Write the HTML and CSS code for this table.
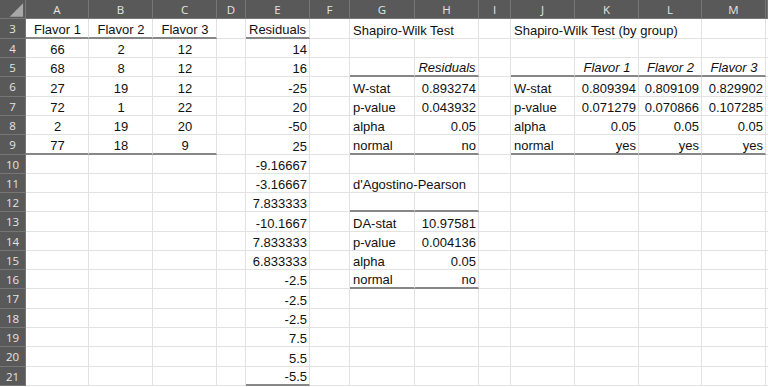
FILE: index.html
```html
<!DOCTYPE html>
<html lang="en">
<head>
<meta charset="utf-8">
<title>Shapiro-Wilk Test</title>
<link rel="stylesheet" href="styles.css">
</head>
<body>
<div class="sheet">
  <!-- column header row -->
  <div class="h corner"><svg width="26" height="19" viewBox="0 0 26 19"><polygon points="24,3 24,17 10,17" fill="#a8a8a8"/></svg></div>
  <div class="h">A</div><div class="h">B</div><div class="h">C</div><div class="h">D</div><div class="h">E</div><div class="h">F</div><div class="h">G</div><div class="h">H</div><div class="h">I</div><div class="h">J</div><div class="h">K</div><div class="h">L</div><div class="h">M</div><div class="h"></div>

  <!-- row 3 -->
  <div class="h">3</div>
  <div class="c b">Flavor 1</div><div class="c b">Flavor 2</div><div class="c b">Flavor 3</div><div></div>
  <div class="b">Residuals</div><div></div>
  <div class="s2">Shapiro-Wilk Test</div><div></div>
  <div class="s3">Shapiro-Wilk Test (by group)</div><div></div><div></div>

  <!-- row 4 -->
  <div class="h">4</div>
  <div class="c">66</div><div class="c">2</div><div class="c">12</div><div></div>
  <div class="r">14</div><div></div>
  <div></div><div></div><div></div>
  <div></div><div></div><div></div><div></div><div></div>

  <!-- row 5 -->
  <div class="h">5</div>
  <div class="c">68</div><div class="c">8</div><div class="c">12</div><div></div>
  <div class="r">16</div><div></div>
  <div class="b"></div><div class="c i b">Residuals</div><div></div>
  <div class="b"></div><div class="c i b">Flavor 1</div><div class="c i b">Flavor 2</div><div class="c i b">Flavor 3</div><div></div>

  <!-- row 6 -->
  <div class="h">6</div>
  <div class="c">27</div><div class="c">19</div><div class="c">12</div><div></div>
  <div class="r">-25</div><div></div>
  <div>W-stat</div><div class="r">0.893274</div><div></div>
  <div>W-stat</div><div class="r">0.809394</div><div class="r">0.809109</div><div class="r">0.829902</div><div></div>

  <!-- row 7 -->
  <div class="h">7</div>
  <div class="c">72</div><div class="c">1</div><div class="c">22</div><div></div>
  <div class="r">20</div><div></div>
  <div>p-value</div><div class="r">0.043932</div><div></div>
  <div>p-value</div><div class="r">0.071279</div><div class="r">0.070866</div><div class="r">0.107285</div><div></div>

  <!-- row 8 -->
  <div class="h">8</div>
  <div class="c">2</div><div class="c">19</div><div class="c">20</div><div></div>
  <div class="r">-50</div><div></div>
  <div>alpha</div><div class="r">0.05</div><div></div>
  <div>alpha</div><div class="r">0.05</div><div class="r">0.05</div><div class="r">0.05</div><div></div>

  <!-- row 9 -->
  <div class="h">9</div>
  <div class="c b">77</div><div class="c b">18</div><div class="c b">9</div><div></div>
  <div class="r">25</div><div></div>
  <div class="b">normal</div><div class="r b">no</div><div></div>
  <div class="b">normal</div><div class="r b">yes</div><div class="r b">yes</div><div class="r b">yes</div><div></div>

  <!-- row 10 -->
  <div class="h">10</div>
  <div></div><div></div><div></div><div></div>
  <div class="r">-9.16667</div><div></div>
  <div></div><div></div><div></div>
  <div></div><div></div><div></div><div></div><div></div>

  <!-- row 11 -->
  <div class="h">11</div>
  <div></div><div></div><div></div><div></div>
  <div class="r">-3.16667</div><div></div>
  <div class="s2">d'Agostino-Pearson</div><div></div>
  <div></div><div></div><div></div><div></div><div></div>

  <!-- row 12 -->
  <div class="h">12</div>
  <div></div><div></div><div></div><div></div>
  <div class="r">7.833333</div><div></div>
  <div class="b"></div><div class="b"></div><div></div>
  <div></div><div></div><div></div><div></div><div></div>

  <!-- row 13 -->
  <div class="h">13</div>
  <div></div><div></div><div></div><div></div>
  <div class="r">-10.1667</div><div></div>
  <div>DA-stat</div><div class="r">10.97581</div><div></div>
  <div></div><div></div><div></div><div></div><div></div>

  <!-- row 14 -->
  <div class="h">14</div>
  <div></div><div></div><div></div><div></div>
  <div class="r">7.833333</div><div></div>
  <div>p-value</div><div class="r">0.004136</div><div></div>
  <div></div><div></div><div></div><div></div><div></div>

  <!-- row 15 -->
  <div class="h">15</div>
  <div></div><div></div><div></div><div></div>
  <div class="r">6.833333</div><div></div>
  <div>alpha</div><div class="r">0.05</div><div></div>
  <div></div><div></div><div></div><div></div><div></div>

  <!-- row 16 -->
  <div class="h">16</div>
  <div></div><div></div><div></div><div></div>
  <div class="r">-2.5</div><div></div>
  <div class="b">normal</div><div class="r b">no</div><div></div>
  <div></div><div></div><div></div><div></div><div></div>

  <!-- row 17 -->
  <div class="h">17</div>
  <div></div><div></div><div></div><div></div>
  <div class="r">-2.5</div><div></div>
  <div></div><div></div><div></div>
  <div></div><div></div><div></div><div></div><div></div>

  <!-- row 18 -->
  <div class="h">18</div>
  <div></div><div></div><div></div><div></div>
  <div class="r">-2.5</div><div></div>
  <div></div><div></div><div></div>
  <div></div><div></div><div></div><div></div><div></div>

  <!-- row 19 -->
  <div class="h">19</div>
  <div></div><div></div><div></div><div></div>
  <div class="r">7.5</div><div></div>
  <div></div><div></div><div></div>
  <div></div><div></div><div></div><div></div><div></div>

  <!-- row 20 -->
  <div class="h">20</div>
  <div></div><div></div><div></div><div></div>
  <div class="r">5.5</div><div></div>
  <div></div><div></div><div></div>
  <div></div><div></div><div></div><div></div><div></div>

  <!-- row 21 -->
  <div class="h">21</div>
  <div></div><div></div><div></div><div></div>
  <div class="r b">-5.5</div><div></div>
  <div></div><div></div><div></div>
  <div></div><div></div><div></div><div></div><div></div>
</div>
</body>
</html>
```

FILE: styles.css
```css
* { box-sizing: border-box; }

html, body {
  margin: 0;
  padding: 0;
  background: #ffffff;
  overflow: hidden;
}

.sheet {
  display: grid;
  grid-template-columns: 26px 63px 64px 64px 29px 64px 40px 65px 64px 32px 64px 64px 63px 64px 2px;
  grid-template-rows: 19px 20px 19px 19px 20px 19px 19px 20px 19px 19px 19px 20px 19px 19px 19px 20px 19px 19px 20px 19px;
  width: 768px;
  height: 387px;
  font-family: "Liberation Sans", Arial, sans-serif;
  font-size: 13px;
  color: #111111;
}

.sheet > div {
  display: flex;
  align-items: flex-end;
  padding: 0 2px 0 3px;
  line-height: 15px;
  white-space: nowrap;
  border-right: 1px solid #e2e2e2;
  border-bottom: 1px solid #e2e2e2;
}

.sheet > .h {
  background: #595959;
  color: #e4e4e4;
  font-family: "Open Sans", "Liberation Sans", sans-serif;
  font-size: 11.5px;
  justify-content: center;
  align-items: center;
  padding: 0;
  line-height: 19px;
  border-right: 1px solid #767676;
  border-bottom: 1px solid #767676;
}

.sheet > .corner {
  padding: 0;
  align-items: flex-start;
  justify-content: flex-start;
}

.corner svg { display: block; }

.c { justify-content: center; }
.r { justify-content: flex-end; }
.i { font-style: italic; }

.sheet > .b { border-bottom: 2px solid #878787; }

.s2 { grid-column: span 2; }
.s3 { grid-column: span 3; }
```
